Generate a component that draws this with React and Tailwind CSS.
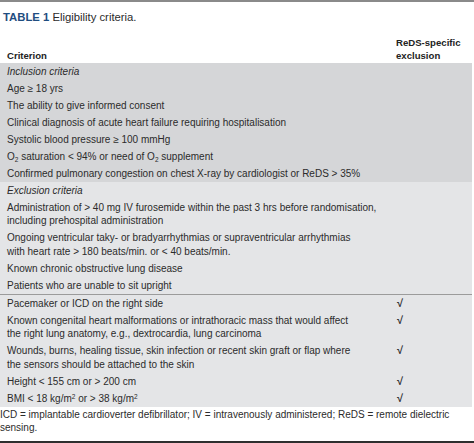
import React from "react";

const font = { fontFamily: '"Liberation Sans", Arial, Helvetica, sans-serif' };

function Row({ children, check, italic, border }) {
  return (
    <div
      className={
        "flex px-0 py-[1.75px] leading-[13.5px] " +
        (border ? "border-t border-[#9b9b9b] " : "")
      }
    >
      <div className={"w-[396px] pl-[7px] whitespace-nowrap " + (italic ? "italic" : "")}>
        {children}
      </div>
      <div className="pl-[1px] text-[11px] font-bold text-[#333]">{check ? "√" : ""}</div>
    </div>
  );
}

export default function App() {
  return (
    <div className="w-[474px] h-[443px] bg-white flex flex-col text-[#2b2b2b]" style={font}>
      <div className="h-[2px] w-full bg-[#8a8a8a]" />
      <div className="pt-[8px] pl-[3px] text-[11.3px] leading-[14px] whitespace-nowrap">
        <span className="font-bold text-[#1f4d80]">TABLE 1</span>{" "}
        <span className="text-[#2b2b2b]">Eligibility criteria.</span>
      </div>
      <div className="w-[472px] mt-[11.5px] flex items-end pb-[1.5px] text-[9.6px] leading-[13px] font-bold text-[#222]">
        <div className="w-[396px] pl-[7px]">Criterion</div>
        <div>
          ReDS-specific
          <br />
          exclusion
        </div>
      </div>
      <div className="w-[472px] text-[10px]">
        <div className="bg-[#d5d6d8]">
          <Row italic>Inclusion criteria</Row>
          <Row>Age ≥ 18 yrs</Row>
          <Row>The ability to give informed consent</Row>
          <Row>Clinical diagnosis of acute heart failure requiring hospitalisation</Row>
          <Row>Systolic blood pressure ≥ 100 mmHg</Row>
          <Row>
            O<sub className="text-[6.5px] align-baseline relative top-[2px]">2</sub> saturation &lt; 94% or need of O
            <sub className="text-[6.5px] align-baseline relative top-[2px]">2</sub> supplement
          </Row>
          <Row>Confirmed pulmonary congestion on chest X-ray by cardiologist or ReDS &gt; 35%</Row>
        </div>
        <div className="bg-[#e4e5e7]">
          <Row italic>Exclusion criteria</Row>
          <Row>
            Administration of &gt; 40 mg IV furosemide within the past 3 hrs before randomisation,
            <br />
            including prehospital administration
          </Row>
          <Row>
            Ongoing ventricular taky- or bradyarrhythmias or supraventricular arrhythmias
            <br />
            with heart rate &gt; 180 beats/min. or &lt; 40 beats/min.
          </Row>
          <Row>Known chronic obstructive lung disease</Row>
          <Row>Patients who are unable to sit upright</Row>
          <Row border check>
            Pacemaker or ICD on the right side
          </Row>
          <Row check>
            Known congenital heart malformations or intrathoracic mass that would affect
            <br />
            the right lung anatomy, e.g., dextrocardia, lung carcinoma
          </Row>
          <Row check>
            Wounds, burns, healing tissue, skin infection or recent skin graft or flap where
            <br />
            the sensors should be attached to the skin
          </Row>
          <Row check>Height &lt; 155 cm or &gt; 200 cm</Row>
          <Row check>
            BMI &lt; 18 kg/m<sup className="text-[6.5px] align-baseline relative top-[-3px]">2</sup> or &gt; 38 kg/m
            <sup className="text-[6.5px] align-baseline relative top-[-3px]">2</sup>
          </Row>
        </div>
      </div>
      <div className="mt-[2px] text-[10px] leading-[12.5px] whitespace-nowrap text-[#2b2b2b]">
        ICD = implantable cardioverter defibrillator; IV = intravenously administered; ReDS = remote dielectric
        <br />
        sensing.
      </div>
      <div className="mt-auto h-[2px] w-full bg-[#2f2f2f]" />
    </div>
  );
}
